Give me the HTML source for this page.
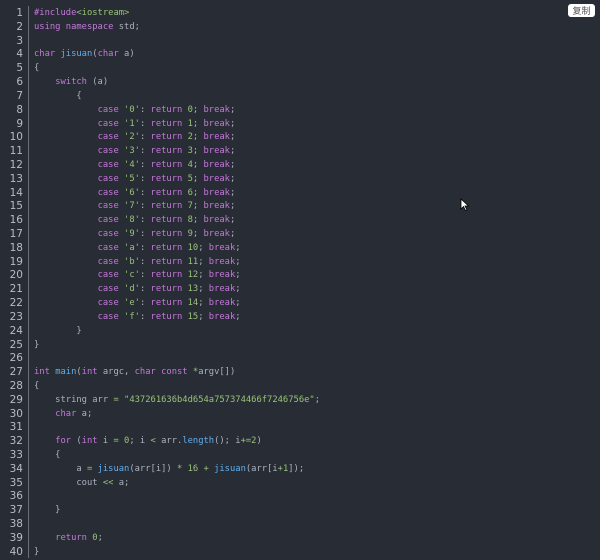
<!DOCTYPE html><html><head><style>
body{margin:0;width:600px;height:560px;background:#282c34;overflow:hidden;position:relative;font-family:"DejaVu Sans Mono",monospace}
.g{position:absolute;left:0;top:7px;width:23px;text-align:right;color:#b8bcc4;font-size:10.5px;line-height:13.82px;font-family:"DejaVu Sans","Liberation Sans",sans-serif}
.sep{position:absolute;left:28px;top:6px;width:1px;height:552px;background:#6b7078}
pre{position:absolute;left:34px;top:7px;margin:0;font-size:8.8px;line-height:13.82px;color:#abb2bf;font-family:"DejaVu Sans Mono",monospace}
.k{color:#c678dd}.f{color:#61afef}.s{color:#98c379}.n{color:#98c379}.o{color:#98c379}
.btn{position:absolute;left:568px;top:4px;width:27px;height:13px;background:#fff;border-radius:3px;font-size:9px;line-height:13px;text-align:center;color:#555;font-family:"Noto Sans CJK SC",sans-serif}
</style></head><body>
<div class="g">1<br>2<br>3<br>4<br>5<br>6<br>7<br>8<br>9<br>10<br>11<br>12<br>13<br>14<br>15<br>16<br>17<br>18<br>19<br>20<br>21<br>22<br>23<br>24<br>25<br>26<br>27<br>28<br>29<br>30<br>31<br>32<br>33<br>34<br>35<br>36<br>37<br>38<br>39<br>40</div>
<div class="sep"></div>
<pre><span class="k">#include</span><span class="s">&lt;iostream&gt;</span>
<span class="k">using</span> <span class="k">namespace</span> std;

<span class="k">char</span> <span class="f">jisuan</span>(<span class="k">char</span> a)
{
    <span class="k">switch</span> (a)
        {
            <span class="k">case</span> <span class="s">'0'</span>: <span class="k">return</span> <span class="n">0</span>; <span class="k">break</span>;
            <span class="k">case</span> <span class="s">'1'</span>: <span class="k">return</span> <span class="n">1</span>; <span class="k">break</span>;
            <span class="k">case</span> <span class="s">'2'</span>: <span class="k">return</span> <span class="n">2</span>; <span class="k">break</span>;
            <span class="k">case</span> <span class="s">'3'</span>: <span class="k">return</span> <span class="n">3</span>; <span class="k">break</span>;
            <span class="k">case</span> <span class="s">'4'</span>: <span class="k">return</span> <span class="n">4</span>; <span class="k">break</span>;
            <span class="k">case</span> <span class="s">'5'</span>: <span class="k">return</span> <span class="n">5</span>; <span class="k">break</span>;
            <span class="k">case</span> <span class="s">'6'</span>: <span class="k">return</span> <span class="n">6</span>; <span class="k">break</span>;
            <span class="k">case</span> <span class="s">'7'</span>: <span class="k">return</span> <span class="n">7</span>; <span class="k">break</span>;
            <span class="k">case</span> <span class="s">'8'</span>: <span class="k">return</span> <span class="n">8</span>; <span class="k">break</span>;
            <span class="k">case</span> <span class="s">'9'</span>: <span class="k">return</span> <span class="n">9</span>; <span class="k">break</span>;
            <span class="k">case</span> <span class="s">'a'</span>: <span class="k">return</span> <span class="n">10</span>; <span class="k">break</span>;
            <span class="k">case</span> <span class="s">'b'</span>: <span class="k">return</span> <span class="n">11</span>; <span class="k">break</span>;
            <span class="k">case</span> <span class="s">'c'</span>: <span class="k">return</span> <span class="n">12</span>; <span class="k">break</span>;
            <span class="k">case</span> <span class="s">'d'</span>: <span class="k">return</span> <span class="n">13</span>; <span class="k">break</span>;
            <span class="k">case</span> <span class="s">'e'</span>: <span class="k">return</span> <span class="n">14</span>; <span class="k">break</span>;
            <span class="k">case</span> <span class="s">'f'</span>: <span class="k">return</span> <span class="n">15</span>; <span class="k">break</span>;
        }
}

<span class="k">int</span> <span class="f">main</span>(<span class="k">int</span> argc, <span class="k">char</span> <span class="k">const</span> <span class="o">*</span>argv[])
{
    string arr <span class="o">=</span> <span class="s">"437261636b4d654a757374466f7246756e"</span>;
    <span class="k">char</span> a;

    <span class="k">for</span> (<span class="k">int</span> i <span class="o">=</span> <span class="n">0</span>; i <span class="o">&lt;</span> arr.<span class="f">length</span>(); i<span class="o">+=</span><span class="n">2</span>)
    {
        a <span class="o">=</span> <span class="f">jisuan</span>(arr[i]) <span class="o">*</span> <span class="n">16</span> <span class="o">+</span> <span class="f">jisuan</span>(arr[i<span class="o">+</span><span class="n">1</span>]);
        cout <span class="o">&lt;&lt;</span> a;

    }

    <span class="k">return</span> <span class="n">0</span>;
}</pre>
<div class="btn">复制</div>
<svg style="position:absolute;left:460px;top:198px" width="10" height="14"><path d="M1 1 L1 11 L3.5 8.5 L5.5 12.5 L7 11.8 L5 8 L8.5 8 Z" fill="#fff" stroke="#000" stroke-width="0.8"/></svg>
</body></html>
